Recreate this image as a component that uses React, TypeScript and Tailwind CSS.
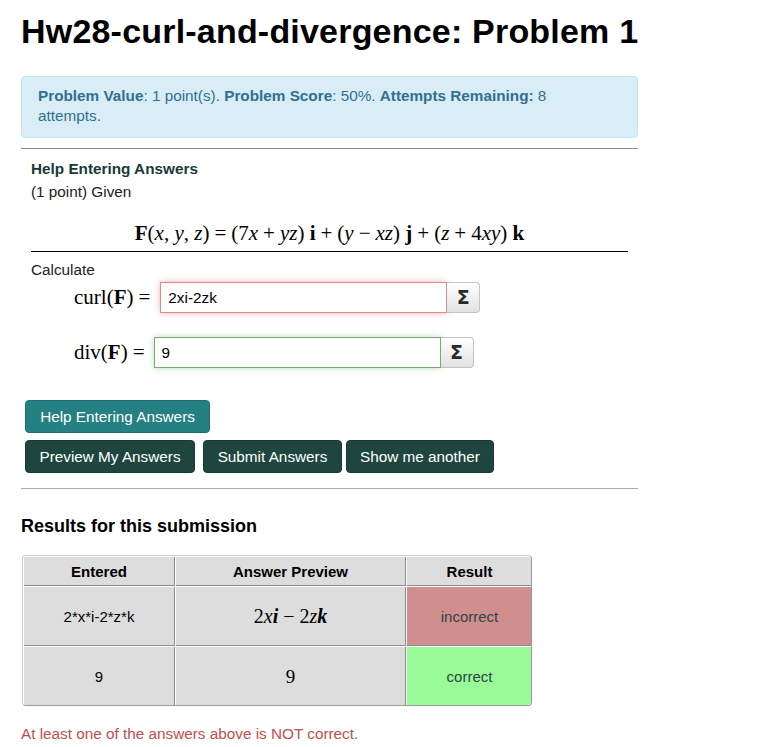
const Op = ({ children }: { children: React.ReactNode }) => (
  <span className="mx-[5px]">{children}</span>
)

const V = ({ children }: { children: React.ReactNode }) => <i>{children}</i>

const Sigma = () => (
  <button className="h-[31px] w-[33px] border border-l-0 border-[#c4c4c4] rounded-r-[4px] bg-gradient-to-b from-white to-[#e2e2e2] flex items-center justify-center text-[19px] font-bold text-[#2a2a2a] font-['DejaVu_Sans',sans-serif]">
    Σ
  </button>
)

const App = () => {
  return (
    <div className="w-[766px] min-h-screen bg-white font-['Liberation_Sans',Arial,sans-serif] text-[15.3px] leading-[21px] text-[#222]">
      <div className="ml-[21px] w-[617px] pt-[11px]">
        <h1 className="text-[34px] leading-[40px] font-bold text-black tracking-[0.2px] whitespace-nowrap">
          Hw28-curl-and-divergence: Problem 1
        </h1>

        {/* score box */}
        <div className="mt-[25px] border border-[#bce8f1] bg-[#d9edf7] rounded-[4px] px-[16px] pt-[9px] pb-[11px] text-[#31708f] leading-[20px]">
          <b>Problem Value</b>: 1 point(s). <b>Problem Score</b>: 50%. <b>Attempts Remaining:</b> 8
          <br />
          attempts.
        </div>

        <div className="mt-[10px] h-px bg-[#8a8a8a]" />

        {/* problem body */}
        <div className="px-[10px]">
          <div className="mt-[9px] font-bold text-[#1a3a3a]">Help Entering Answers</div>
          <div className="mt-[2px]">(1 point) Given</div>

          <div className="mt-[19px] text-center font-['Liberation_Serif',serif] text-[21px] leading-[24px] text-black">
            <b>F</b>(<V>x</V>, <V>y</V>, <V>z</V>)<Op>=</Op>(7<V>x</V><Op>+</Op><V>yz</V>) <b>i</b>
            <Op>+</Op>(<V>y</V><Op>−</Op><V>xz</V>) <b>j</b>
            <Op>+</Op>(<V>z</V><Op>+</Op>4<V>xy</V>) <b>k</b>
          </div>
          <div className="mt-[6px] h-px bg-black" />

          <div className="mt-[7px]">Calculate</div>

          <div className="mt-[2px] pl-[43px] flex items-center gap-[5px]">
            <span className="font-['Liberation_Serif',serif] text-[21px] text-black">
              curl(<b>F</b>)<Op>=</Op>
            </span>
            <div className="flex">
              <div className="h-[31px] w-[287px] border border-[#d98a8a] shadow-[0_0_6px_rgba(217,83,79,0.45)] bg-white px-[7px] flex items-center text-black">
                2xi-2zk
              </div>
              <Sigma />
            </div>
          </div>

          <div className="mt-[24px] pl-[43px] flex items-center gap-[4px]">
            <span className="font-['Liberation_Serif',serif] text-[21px] text-black">
              div(<b>F</b>)<Op>=</Op>
            </span>
            <div className="flex">
              <div className="h-[31px] w-[287px] border border-[#75ad6f] shadow-[0_0_6px_rgba(92,184,92,0.45)] bg-white px-[7px] flex items-center text-black">
                9
              </div>
              <Sigma />
            </div>
          </div>
        </div>

        {/* buttons */}
        <div className="mt-[32px] ml-[4px]">
          <button className="h-[33px] w-[185px] rounded-[4px] bg-[#258082] border border-[#1e6f71] text-white">
            Help Entering Answers
          </button>
        </div>
        <div className="mt-[7px] ml-[4px] flex">
          <button className="h-[33px] w-[170px] rounded-[4px] bg-[#1e463e] border border-[#173a33] text-white">
            Preview My Answers
          </button>
          <button className="ml-[8px] h-[33px] w-[139px] rounded-[4px] bg-[#1e463e] border border-[#173a33] text-white">
            Submit Answers
          </button>
          <button className="ml-[4px] h-[33px] w-[148px] rounded-[4px] bg-[#1e463e] border border-[#173a33] text-white">
            Show me another
          </button>
        </div>

        <div className="mt-[15px] h-px bg-[#a8a8a8]" />

        <h2 className="mt-[27px] text-[18px] leading-[20px] font-bold text-black">Results for this submission</h2>

        {/* results table */}
        <div className="mt-[19px] ml-[1px] w-[510px] border border-[#cfcfcf] border-r-[#9a9a9a] border-b-[#9a9a9a] rounded-[4px] bg-white overflow-hidden">
          <div className="grid grid-cols-[151px_230px_125px] grid-rows-[29px_59px_58px] gap-[1px] pt-px pl-px text-[15px] text-black">
            <div className="bg-[#dddddd] border-r border-b border-[#8c8c8c] flex items-center justify-center font-bold">Entered</div>
            <div className="bg-[#dddddd] border-r border-b border-[#8c8c8c] flex items-center justify-center font-bold">Answer Preview</div>
            <div className="bg-[#dddddd] border-b border-[#8c8c8c] flex items-center justify-center font-bold">Result</div>

            <div className="bg-[#dddddd] border-r border-b border-[#8c8c8c] flex items-center justify-center">2*x*i-2*z*k</div>
            <div className="bg-[#dddddd] border-r border-b border-[#8c8c8c] flex items-center justify-center font-['Liberation_Serif',serif] text-[20px]">
              2<V>x</V><b><i>i</i></b><Op>−</Op>2<V>z</V><b><i>k</i></b>
            </div>
            <div className="bg-[#d08e8e] border-b border-[#8c8c8c] flex items-center justify-center text-[#2f4545]">incorrect</div>

            <div className="bg-[#dddddd] border-r border-[#8c8c8c] flex items-center justify-center">9</div>
            <div className="bg-[#dddddd] border-r border-[#8c8c8c] flex items-center justify-center font-['Liberation_Serif',serif] text-[19px]">9</div>
            <div className="bg-[#98fb98] flex items-center justify-center text-[#2f4545]">correct</div>
          </div>
        </div>

        <p className="mt-[17px] text-[#bf4e4e]">At least one of the answers above is NOT correct.</p>
      </div>
    </div>
  )
}

export default App
